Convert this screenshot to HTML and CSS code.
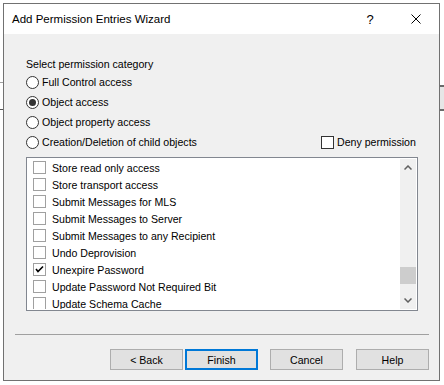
FILE: index.html
```html
<!DOCTYPE html>
<html>
<head>
<meta charset="utf-8">
<link rel="stylesheet" href="styles.css">
</head>
<body>
<div class="window">
  <div class="titlebar">
    <span class="title">Add Permission Entries Wizard</span>
    <span class="cap-btn help-glyph">?</span>
    <span class="cap-btn">
      <svg width="10" height="10" viewBox="0 0 10 10"><path d="M0.5 0.5 L9.5 9.5 M9.5 0.5 L0.5 9.5" stroke="#000" stroke-width="1" fill="none"/></svg>
    </span>
  </div>
  <div class="content">
    <div class="section-label">Select permission category</div>
    <div class="radios">
      <div class="radio-row"><span class="radio"></span><span class="rlabel">Full Control access</span></div>
      <div class="radio-row"><span class="radio checked"></span><span class="rlabel">Object access</span></div>
      <div class="radio-row"><span class="radio"></span><span class="rlabel">Object property access</span></div>
      <div class="radio-row last">
        <div class="radio-cell"><span class="radio"></span><span class="rlabel">Creation/Deletion of child objects</span></div>
        <div class="deny"><span class="box"></span><span class="rlabel">Deny permission</span></div>
      </div>
    </div>
    <div class="listbox">
      <div class="items">
        <div class="item"><span class="lbox"></span>Store read only access</div>
        <div class="item"><span class="lbox"></span>Store transport access</div>
        <div class="item"><span class="lbox"></span>Submit Messages for MLS</div>
        <div class="item"><span class="lbox"></span>Submit Messages to Server</div>
        <div class="item"><span class="lbox"></span>Submit Messages to any Recipient</div>
        <div class="item"><span class="lbox"></span>Undo Deprovision</div>
        <div class="item"><span class="lbox checked"><svg width="11" height="11" viewBox="0 0 11 11"><path d="M2 5 L4 7.5 L9 2.5" stroke="#000" stroke-width="1.6" fill="none"/></svg></span>Unexpire Password</div>
        <div class="item"><span class="lbox"></span>Update Password Not Required Bit</div>
        <div class="item"><span class="lbox"></span>Update Schema Cache</div>
      </div>
      <div class="scrollbar">
        <div class="sb-btn"><svg width="8" height="5" viewBox="0 0 8 5"><path d="M0.5 4.5 L4 1 L7.5 4.5" stroke="#606060" stroke-width="1.5" fill="none"/></svg></div>
        <div class="sb-track"><div class="sb-thumb"></div></div>
        <div class="sb-btn"><svg width="8" height="5" viewBox="0 0 8 5"><path d="M0.5 0.5 L4 4 L7.5 0.5" stroke="#606060" stroke-width="1.5" fill="none"/></svg></div>
      </div>
    </div>
  </div>
  <div class="separator"></div>
  <div class="buttons">
    <div class="btn-pair">
      <button class="btn">&lt; Back</button>
      <button class="btn default">Finish</button>
    </div>
    <button class="btn">Cancel</button>
    <button class="btn help">Help</button>
  </div>
</div>
</body>
</html>
```

FILE: styles.css
```css
html, body {
  margin: 0;
  padding: 0;
}
body {
  width: 444px;
  height: 385px;
  overflow: hidden;
  font-family: "Liberation Sans", Arial, sans-serif;
  font-size: 10.6px;
  color: #000;
  background:
    linear-gradient(#a0a0a0, #a0a0a0) 0 82px / 3px 1px no-repeat,
    linear-gradient(#555, #555) 0 109px / 3px 1px no-repeat,
    linear-gradient(#6a6a6a, #6a6a6a) 440px 85px / 4px 2px no-repeat,
    linear-gradient(#e6e6e6, #e6e6e6) 440px 87px / 4px 22px no-repeat,
    linear-gradient(#6a6a6a, #6a6a6a) 440px 109px / 4px 2px no-repeat,
    #fff;
}
.window {
  margin: 3px;
  width: 435px;
  height: 376px;
  border: 1px solid #717171;
  background: #f0f0f0;
  display: flex;
  flex-direction: column;
}
.titlebar {
  height: 30px;
  background: #fff;
  display: flex;
  align-items: center;
  padding-left: 8px;
}
.title {
  flex: 1;
  font-size: 11.5px;
}
.cap-btn {
  width: 46px;
  height: 30px;
  display: flex;
  align-items: center;
  justify-content: center;
}
.help-glyph {
  font-size: 13px;
}
.content {
  padding: 22px 0 0 22px;
}
.section-label {
  height: 16px;
  line-height: 16px;
}
.radio-row {
  height: 20px;
  display: flex;
  align-items: center;
}
.radio-row.last {
  display: grid;
  grid-template-columns: 295px auto;
  align-items: center;
}
.radio-cell, .deny {
  display: flex;
  align-items: center;
}
.radio {
  width: 11px;
  height: 11px;
  border: 1px solid #333;
  border-radius: 50%;
  background: #fff;
  position: relative;
  flex: none;
}
.radio.checked::after {
  content: "";
  position: absolute;
  left: 2px;
  top: 2px;
  width: 7px;
  height: 7px;
  border-radius: 50%;
  background: #333;
}
.rlabel {
  margin-left: 3px;
  white-space: nowrap;
}
.box {
  width: 11px;
  height: 11px;
  border: 1px solid #333;
  background: #fff;
  flex: none;
}
.listbox {
  margin-top: 5px;
  width: 388px;
  height: 150px;
  border: 1px solid #828790;
  padding: 1px;
  background: #fff;
  display: flex;
}
.items {
  flex: 1;
  overflow: hidden;
}
.item {
  height: 17px;
  display: flex;
  align-items: center;
  padding-left: 5px;
  white-space: nowrap;
}
.lbox {
  width: 11px;
  height: 11px;
  border: 1px solid #a0a0a0;
  background: #fff;
  margin-right: 6px;
  flex: none;
  display: flex;
  align-items: center;
  justify-content: center;
}
.lbox svg {
  display: block;
}
.scrollbar {
  width: 16px;
  background: #f0f0f0;
  display: flex;
  flex-direction: column;
}
.sb-btn {
  height: 17px;
  display: flex;
  align-items: center;
  justify-content: center;
}
.sb-track {
  flex: 1;
}
.sb-thumb {
  margin-top: 91px;
  height: 17px;
  background: #cdcdcd;
}
.separator {
  margin: 23px 10px 0 11px;
  border-top: 1px solid #a0a0a0;
}
.buttons {
  margin-top: 14px;
  padding-right: 10px;
  display: flex;
  justify-content: flex-end;
  gap: 12px;
}
.btn-pair {
  display: flex;
  gap: 2px;
}
.btn {
  width: 73px;
  height: 21px;
  border: 1px solid #adadad;
  background: #e1e1e1;
  font-family: "Liberation Sans", Arial, sans-serif;
  font-size: 10.6px;
  color: #000;
  padding: 0;
  margin: 0;
}
.btn.default {
  border: 2px solid #0078d7;
}
.btn.help {
  margin-left: 1px;
}
```
